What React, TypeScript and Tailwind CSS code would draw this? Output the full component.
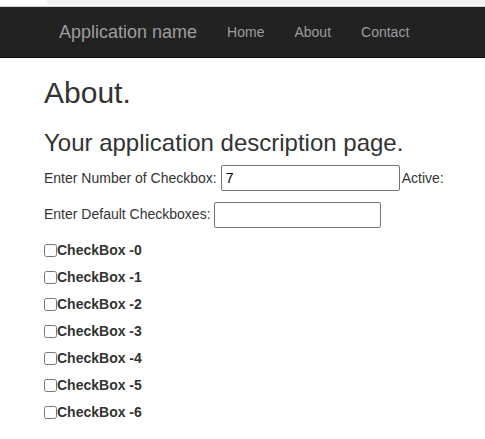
import { useState } from 'react';

const navLinks = ['Home', 'About', 'Contact'];

export default function App() {
  const [count, setCount] = useState('7');
  const [defaults, setDefaults] = useState('');
  const n = Math.max(0, parseInt(count, 10) || 0);

  return (
    <div className="min-h-screen bg-white font-['Liberation_Sans',Arial,sans-serif] text-[14px] text-[#333]">
      {/* browser chrome strip */}
      <div className="h-[6px] bg-white">
        <div className="ml-[47px] h-[5px] rounded-bl-[4px] bg-[#f1f1f1]" />
      </div>
      <div className="h-px bg-[#cfcfcf]" />

      {/* Navbar */}
      <nav className="flex h-[51px] items-center border-b border-[#080808] bg-[#222] px-[44px]">
        <span className="px-[15px] text-[18px] text-[#9d9d9d]">Application name</span>
        {navLinks.map((l) => (
          <a key={l} className="px-[15px] text-[14px] text-[#9d9d9d]" href="#">
            {l}
          </a>
        ))}
      </nav>

      <div className="pl-[44px]">
        <h2 className="mt-[18px] text-[30px] leading-[33px] text-[#333]">About.</h2>
        <h3 className="mt-[21px] mb-[9px] text-[24px] leading-[26px] text-[#333]">
          Your application description page.
        </h3>

        <div className="flex h-[26px] items-center whitespace-nowrap">
          <span className="shrink-0">Enter Number of Checkbox:</span>
          <input
            value={count}
            onChange={(e) => setCount(e.target.value)}
            className="ml-[4px] h-[26px] w-[179px] shrink-0 rounded-[2px] border border-[#767676] px-[4px] text-[14px] text-black"
          />
          <span className="ml-[2px] shrink-0">Active:</span>
        </div>

        <div className="mt-[10px] flex h-[27px] items-center whitespace-nowrap">
          <span className="shrink-0">Enter Default Checkboxes:</span>
          <input
            value={defaults}
            onChange={(e) => setDefaults(e.target.value)}
            className="ml-[3px] h-[26px] w-[167px] shrink-0 rounded-[2px] border border-[#767676] px-[4px] text-[14px] text-black"
          />
        </div>

        <div className="mt-[9px]">
          {Array.from({ length: n }).map((_, i) => (
            <label key={i} className="flex h-[27px] items-center">
              <input type="checkbox" className="m-0 h-[13px] w-[13px]" />
              <span className="font-bold">CheckBox -{i}</span>
            </label>
          ))}
        </div>
      </div>
    </div>
  );
}
